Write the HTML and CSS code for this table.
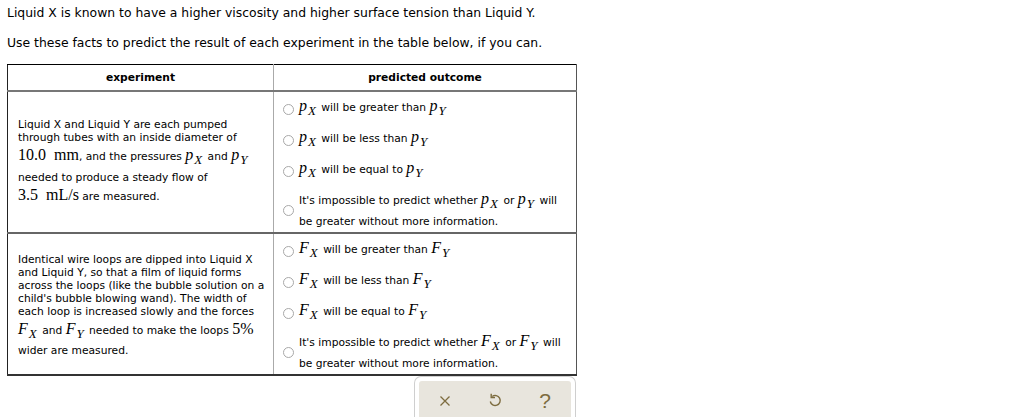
FILE: index.html
```html
<!DOCTYPE html>
<html>
<head>
<meta charset="utf-8">
<link rel="stylesheet" href="styles.css">
</head>
<body>
<p class="intro">Liquid X is known to have a higher viscosity and higher surface tension than Liquid Y.</p>
<p class="intro second">Use these facts to predict the result of each experiment in the table below, if you can.</p>
<table class="grid">
  <thead>
    <tr><th class="c1">experiment</th><th class="c2">predicted outcome</th></tr>
  </thead>
  <tbody>
    <tr class="row1">
      <td class="exp">
        <div>Liquid X and Liquid Y are each pumped<br>through tubes with an inside diameter of</div>
        <div class="mline"><span class="m">10.0&nbsp; mm</span>, and the pressures <span class="m i">p<sub>X</sub></span> and <span class="m i">p<sub>Y</sub></span></div>
        <div class="needed">needed to produce a steady flow of</div>
        <div class="mline2"><span class="m">3.5&nbsp; mL/s</span> are measured.</div>
      </td>
      <td class="out">
        <div class="opt"><span class="radio"></span><span><span class="m i">p<sub>X</sub></span> will be greater than <span class="m i">p<sub>Y</sub></span></span></div>
        <div class="opt"><span class="radio"></span><span><span class="m i">p<sub>X</sub></span> will be less than <span class="m i">p<sub>Y</sub></span></span></div>
        <div class="opt"><span class="radio"></span><span><span class="m i">p<sub>X</sub></span> will be equal to <span class="m i">p<sub>Y</sub></span></span></div>
        <div class="opt two"><span class="radio"></span><span class="txt">It's impossible to predict whether <span class="m i">p<sub>X</sub></span> or <span class="m i">p<sub>Y</sub></span> will<br>be greater without more information.</span></div>
      </td>
    </tr>
    <tr class="row2">
      <td class="exp">
        <div>Identical wire loops are dipped into Liquid X<br>and Liquid Y, so that a film of liquid forms<br>across the loops (like the bubble solution on a<br>child's bubble blowing wand). The width of<br>each loop is increased slowly and the forces</div>
        <div class="mline"><span class="m i">F<sub>X</sub></span> and <span class="m i">F<sub>Y</sub></span> needed to make the loops <span class="m">5%</span></div>
        <div class="last">wider are measured.</div>
      </td>
      <td class="out">
        <div class="opt"><span class="radio"></span><span><span class="m i">F<sub>X</sub></span> will be greater than <span class="m i">F<sub>Y</sub></span></span></div>
        <div class="opt"><span class="radio"></span><span><span class="m i">F<sub>X</sub></span> will be less than <span class="m i">F<sub>Y</sub></span></span></div>
        <div class="opt"><span class="radio"></span><span><span class="m i">F<sub>X</sub></span> will be equal to <span class="m i">F<sub>Y</sub></span></span></div>
        <div class="opt two"><span class="radio"></span><span class="txt">It's impossible to predict whether <span class="m i">F<sub>X</sub></span> or <span class="m i">F<sub>Y</sub></span> will<br>be greater without more information.</span></div>
      </td>
    </tr>
  </tbody>
</table>
<div class="tools">
  <div class="toolbox">
    <span class="tool">
      <svg width="14" height="14" viewBox="0 0 14 14"><path d="M2.5 2.5 L11.5 11.5 M11.5 2.5 L2.5 11.5" stroke="#7d6c3f" stroke-width="1.3" fill="none"/></svg>
    </span>
    <span class="tool">
      <svg width="14" height="16" viewBox="0 0 14 16"><path d="M4.2 3.5 A5 5 0 1 1 2.3 8.5" stroke="#7d6c3f" stroke-width="1.4" fill="none"/><path d="M3.2 0.8 L3.2 4.6 L7 4.6" stroke="#7d6c3f" stroke-width="1.4" fill="none"/></svg>
    </span>
    <span class="tool q">?</span>
  </div>
</div>
</body>
</html>
```
FILE: styles.css
```css
html, body { overflow: hidden; }
body {
  margin: 0;
  padding: 0 7px;
  font-family: "DejaVu Sans", Verdana, sans-serif;
  color: #000;
  background: #fff;
  width: 570px;
  height: 418px;
}
.intro {
  margin: 0;
  padding-top: 5px;
  font-size: 12.4px;
  line-height: 15px;
}
.intro.second {
  padding-top: 15px;
}
.grid {
  margin-top: 14px;
  border-collapse: collapse;
  width: 570px;
  font-size: 10.7px;
  table-layout: fixed;
}
.grid th {
  height: 25px;
  font-weight: bold;
  font-size: 10.7px;
  text-align: center;
  vertical-align: middle;
  border-top: 1px solid #000;
  border-bottom: 2px solid #777;
  padding: 0;
}
.grid th.c1 { width: 265px; border-left: 1px solid #222; border-right: 1px solid #aaa; }
.grid th.c2 { border-right: 1px solid #555; }
.grid td {
  padding: 0;
  vertical-align: middle;
}
.grid td.exp {
  border-left: 1px solid #222;
  border-right: 1px solid #aaa;
  padding-left: 10px;
  line-height: 13px;
}
.row2 td.exp { padding-top: 6px; }
.grid td.out {
  border-right: 1px solid #555;
  padding: 0 0 0 9px;
}
.row1 td { border-bottom: 2px solid #666; }
.row2 td { border-bottom: 2px solid #333; }
.mline { line-height: 22px; height: 22px; }
.mline2 { line-height: 18px; margin-top: 2px; }
.needed { margin-top: 5px; }
.last { line-height: 22px; }
.m {
  font-family: "Liberation Serif", "Times New Roman", serif;
  font-size: 16px;
}
.m.i { font-style: italic; }
.m sub {
  font-size: 13px;
  vertical-align: -4px;
  line-height: 0;
  margin-left: 1px;
  margin-right: 2px;
}
.opt {
  display: flex;
  align-items: center;
  gap: 5px;
  height: 31px;
  box-sizing: border-box;
  padding-bottom: 4px;
  white-space: nowrap;
}
.opt.two {
  height: 45px;
  padding-bottom: 0;
  margin-top: 2px;
}
.opt.two .txt { line-height: 21px; }
.radio {
  flex: none;
  width: 11px;
  height: 11px;
  border: 1px solid #a8a8a8;
  border-radius: 50%;
  box-sizing: border-box;
  background: #fff;
  margin-top: 7px;
}
.opt.two .radio { margin-top: 2px; }
.tools {
  margin: 0 0 0 407px;
  width: 162px;
  height: 41px;
  border: 1px solid #cfcfcf;
  border-bottom: none;
  border-radius: 7px 7px 0 0;
  padding: 4px 4px 0 4px;
  box-sizing: border-box;
  background: #fff;
}
.toolbox {
  height: 100%;
  background: #e8e5dd;
  border-radius: 3px 3px 0 0;
  display: flex;
  justify-content: flex-start;
  align-items: center;
  gap: 30px;
  padding-left: 16px;
}
.tool {
  display: flex;
  align-items: center;
  justify-content: center;
  width: 20px;
  height: 20px;
  margin-top: 4px;
}
.tool.q {
  font-family: "Liberation Sans", sans-serif;
  font-size: 21px;
  color: #7d6c3f;
}
```
